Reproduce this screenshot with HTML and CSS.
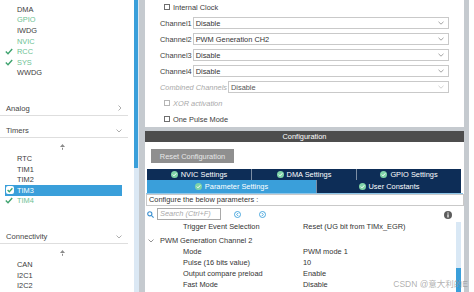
FILE: index.html
```html
<!DOCTYPE html>
<html lang="en">
<head>
  <meta charset="UTF-8">
  <title>TIM3 Mode and Configuration</title>
  <link rel="stylesheet" href="styles.css">
</head>
<body>
  <div class="app">
    <aside class="sidebar">
      <ul class="periph">
        <li>DMA</li>
        <li class="on">GPIO</li>
        <li>IWDG</li>
        <li class="on">NVIC</li>
        <li class="on ok"><svg class="tick" width="8" height="7" viewBox="0 0 8 7"><polyline points="0.8,3.6 3,5.8 7.2,1"/></svg>RCC</li>
        <li class="on ok"><svg class="tick" width="8" height="7" viewBox="0 0 8 7"><polyline points="0.8,3.6 3,5.8 7.2,1"/></svg>SYS</li>
        <li>WWDG</li>
      </ul>

      <div class="cat">Analog
        <svg width="5" height="6" viewBox="0 0 5 6"><polyline points="1.5,0.5 4,3 1.5,5.5"/></svg>
      </div>
      <div class="cat">Timers
        <svg width="6" height="5" viewBox="0 0 6 5"><polyline points="0.5,1.5 3,4 5.5,1.5"/></svg>
      </div>
      <div class="sort">
        <svg width="5" height="6" viewBox="0 0 5 6"><polygon points="0,3 2.5,0 5,3"/><rect x="2" y="3.8" width="1" height="2"/></svg>
      </div>
      <ul class="periph">
        <li>RTC</li>
        <li>TIM1</li>
        <li>TIM2</li>
        <li class="sel"><svg class="box" width="8" height="8" viewBox="0 0 8 8"><rect x="0" y="0" width="8" height="8" rx="2"/><polyline points="1.6,4 3.3,5.7 6.4,2.2"/></svg>TIM3</li>
        <li class="on ok"><svg class="tick" width="8" height="7" viewBox="0 0 8 7"><polyline points="0.8,3.6 3,5.8 7.2,1"/></svg>TIM4</li>
      </ul>

      <div class="cat">Connectivity
        <svg width="6" height="5" viewBox="0 0 6 5"><polyline points="0.5,1.5 3,4 5.5,1.5"/></svg>
      </div>
      <div class="sort">
        <svg width="5" height="6" viewBox="0 0 5 6"><polygon points="0,3 2.5,0 5,3"/><rect x="2" y="3.8" width="1" height="2"/></svg>
      </div>
      <ul class="periph">
        <li>CAN</li>
        <li>I2C1</li>
        <li>I2C2</li>
      </ul>
    </aside>

    <div class="side-scroll"><div class="thumb"></div></div>
    <div class="divider"></div>

    <main class="main">
      <section class="mode">
        <div class="row check"><span class="cb"></span>Internal Clock</div>
        <div class="row"><span class="lbl">Channel1</span>
          <div class="select"><span>Disable</span><svg width="6" height="4" viewBox="0 0 6 4"><polyline points="0.5,0.8 3,3.2 5.5,0.8"/></svg></div>
        </div>
        <div class="row"><span class="lbl">Channel2</span>
          <div class="select"><span>PWM Generation CH2</span><svg width="6" height="4" viewBox="0 0 6 4"><polyline points="0.5,0.8 3,3.2 5.5,0.8"/></svg></div>
        </div>
        <div class="row"><span class="lbl">Channel3</span>
          <div class="select"><span>Disable</span><svg width="6" height="4" viewBox="0 0 6 4"><polyline points="0.5,0.8 3,3.2 5.5,0.8"/></svg></div>
        </div>
        <div class="row"><span class="lbl">Channel4</span>
          <div class="select"><span>Disable</span><svg width="6" height="4" viewBox="0 0 6 4"><polyline points="0.5,0.8 3,3.2 5.5,0.8"/></svg></div>
        </div>
        <div class="row"><span class="lbl muted">Combined Channels</span>
          <div class="select off"><span>Disable</span><svg width="6" height="4" viewBox="0 0 6 4"><polyline points="0.5,0.8 3,3.2 5.5,0.8"/></svg></div>
        </div>
        <div class="row check muted"><span class="cb"></span>XOR activation</div>
        <div class="row check"><span class="cb"></span>One Pulse Mode</div>
      </section>

      <div class="sep"></div>
      <div class="cfg-title">Configuration</div>

      <section class="cfg">
        <button class="reset">Reset Configuration</button>

        <div class="tabs">
          <div class="tab-row">
            <div class="tab"><svg width="7" height="7" viewBox="0 0 7 7"><circle cx="3.5" cy="3.5" r="3.5"/><polyline points="1.8,3.6 3,4.8 5.3,2.3"/></svg>NVIC Settings</div>
            <div class="tab"><svg width="7" height="7" viewBox="0 0 7 7"><circle cx="3.5" cy="3.5" r="3.5"/><polyline points="1.8,3.6 3,4.8 5.3,2.3"/></svg>DMA Settings</div>
            <div class="tab"><svg width="7" height="7" viewBox="0 0 7 7"><circle cx="3.5" cy="3.5" r="3.5"/><polyline points="1.8,3.6 3,4.8 5.3,2.3"/></svg>GPIO Settings</div>
          </div>
          <div class="tab-row tall">
            <div class="tab active"><svg width="7" height="7" viewBox="0 0 7 7"><circle cx="3.5" cy="3.5" r="3.5"/><polyline points="1.8,3.6 3,4.8 5.3,2.3"/></svg>Parameter Settings</div>
            <div class="tab"><svg width="7" height="7" viewBox="0 0 7 7"><circle cx="3.5" cy="3.5" r="3.5"/><polyline points="1.8,3.6 3,4.8 5.3,2.3"/></svg>User Constants</div>
          </div>
        </div>
        <div class="tab-line"></div>

        <div class="cfg-box">Configure the below parameters :</div>

        <div class="search">
          <svg class="glass" width="7" height="7" viewBox="0 0 7 7"><circle cx="2.8" cy="2.8" r="2.1"/><line x1="4.3" y1="4.3" x2="6.6" y2="6.6"/></svg>
          <div class="search-input">Search (Ctrl+F)</div>
          <svg class="nav prev" width="7" height="7" viewBox="0 0 7 7"><circle cx="3.5" cy="3.5" r="3"/><polyline points="4.2,2 2.7,3.5 4.2,5"/></svg>
          <svg class="nav next" width="7" height="7" viewBox="0 0 7 7"><circle cx="3.5" cy="3.5" r="3"/><polyline points="2.8,2 4.3,3.5 2.8,5"/></svg>
          <svg class="info" width="8" height="8" viewBox="0 0 8 8"><circle cx="4" cy="4" r="4"/><rect x="3.4" y="1.5" width="1.2" height="1.1"/><rect x="3.4" y="3.3" width="1.2" height="3.2"/></svg>
        </div>

        <div class="params">
          <div class="plist">
            <div class="prow"><span class="k">Trigger Event Selection</span><span>Reset (UG bit from TIMx_EGR)</span></div>
            <div class="prow group"><svg width="6" height="5" viewBox="0 0 6 5"><polyline points="0.5,1.5 3,4 5.5,1.5"/></svg>PWM Generation Channel 2</div>
            <div class="prow"><span class="k">Mode</span><span>PWM mode 1</span></div>
            <div class="prow"><span class="k">Pulse (16 bits value)</span><span>10</span></div>
            <div class="prow"><span class="k">Output compare preload</span><span>Enable</span></div>
            <div class="prow"><span class="k">Fast Mode</span><span>Disable</span></div>
          </div>
          <div class="pscroll"><div class="thumb"></div></div>
        </div>
      </section>
    </main>

    <div class="divider right"></div>
  </div>

  <div class="watermark">CSDN @意大利的E</div>
</body>
</html>
```

FILE: styles.css
```css
* {
  box-sizing: border-box;
}

html, body {
  margin: 0;
}

body {
  width: 474px;
  height: 292px;
  overflow: hidden;
  position: relative;
  background: #fff;
  color: #3c3c3c;
  font-family: "Liberation Sans", Arial, sans-serif;
  font-size: 7.4px;
}

.app {
  display: flex;
  height: 292px;
}

/* left tree */

.sidebar {
  width: 134px;
  flex: none;
  padding-top: 4px;
}

.periph {
  list-style: none;
  margin: 0 0 16px;
  padding: 0;
}

.periph li {
  height: 10.6px;
  display: flex;
  align-items: center;
  padding-left: 17px;
}

.periph li.on {
  color: #6cc193;
}

.periph li.ok {
  padding-left: 5px;
}

.tick {
  margin-right: 4px;
  fill: none;
  stroke: #3fa36f;
  stroke-width: 1.4;
}

.periph li.sel {
  background: #3a9fda;
  color: #fff;
  padding-left: 1px;
  margin: 0 12px 0 5px;
}

.box {
  margin-right: 3px;
}

.box rect {
  fill: #fff;
}

.box polyline {
  fill: none;
  stroke: #3fa36f;
  stroke-width: 1.3;
}

.cat {
  height: 22px;
  margin-right: 6px;
  padding: 0 6px 2px;
  border-bottom: 1px solid #dedede;
  display: flex;
  align-items: flex-end;
  justify-content: space-between;
  color: #454545;
  font-size: 7.6px;
}

.cat svg {
  margin-bottom: 2px;
  fill: none;
  stroke: #999;
  stroke-width: 0.8;
}

.sort {
  height: 15px;
  padding: 6px 0 0 60px;
  display: flex;
  align-items: flex-start;
}

.sort svg {
  fill: #8a8a8a;
}

.side-scroll {
  width: 5px;
  flex: none;
  background: #dbe8f4;
}

.side-scroll .thumb {
  height: 168px;
  width: 4px;
  background: #3a9fda;
}

.divider {
  width: 6px;
  flex: none;
  background: #c5cacf;
}

.divider.right {
  width: 5px;
}

/* main area */

.main {
  width: 319px;
  flex: none;
}

.mode {
  height: 127px;
  padding: 1px 15px 0;
  display: flex;
  flex-direction: column;
  gap: 4px;
}

.row {
  height: 12px;
  display: flex;
  align-items: center;
}

.row.check {
  padding-left: 4px;
}

.cb {
  width: 6px;
  height: 6px;
  margin-right: 3px;
  border: 1px solid #6e6e6e;
}

.muted {
  color: #a9a9a9;
  font-style: italic;
}

.muted .cb {
  border-color: #b5b5b5;
}

.lbl {
  margin-right: 1px;
}

.select {
  flex: 1;
  height: 12px;
  padding: 0 4px 0 2px;
  border: 1px solid #c9c9c9;
  display: flex;
  align-items: center;
  justify-content: space-between;
  color: #333;
}

.select svg {
  fill: none;
  stroke: #8a8a8a;
  stroke-width: 0.8;
}

.select.off {
  color: #555;
}

.select.off svg {
  stroke: #c4c4c4;
}

.sep {
  height: 4px;
  background: #c5cacf;
}

.cfg-title {
  height: 11px;
  line-height: 11px;
  background: #4d4d4d;
  color: #fff;
  text-align: center;
}

.cfg {
  padding-top: 7px;
}

.reset {
  display: block;
  width: 83px;
  height: 14px;
  margin-left: 6px;
  padding: 0;
  border: 0;
  background: #8f8f8f;
  color: #e8e8e8;
  font: inherit;
}

.tabs {
  margin: 6px 3px 0 2px;
}

.tab-row {
  display: flex;
  height: 11px;
  background: #0d2d57;
}

.tab-row.tall {
  height: 13px;
}

.tab {
  flex: 1;
  display: flex;
  align-items: center;
  justify-content: center;
  gap: 3px;
  color: #fff;
  border-left: 1px solid #7c8ea5;
}

.tab:first-child {
  border-left: 0;
}

.tab.active {
  flex: none;
  width: 169px;
  background: #3a9fda;
}

.tab svg circle {
  fill: #7fd4a8;
}

.tab svg polyline {
  fill: none;
  stroke: #fff;
  stroke-width: 1;
}

.tab-line {
  height: 1px;
  margin: 0 1px;
  background: #8cc6ea;
}

.cfg-box {
  height: 12px;
  margin-left: 1px;
  padding-left: 2px;
  line-height: 10px;
  border: 1px solid #c9c9c9;
  color: #333;
}

.search {
  height: 12px;
  margin-top: 2px;
  padding-left: 2px;
  display: flex;
  align-items: center;
}

.glass {
  fill: none;
  stroke: #3a8fd0;
  stroke-width: 1.1;
}

.search-input {
  width: 64px;
  height: 12px;
  margin-left: 3px;
  padding-left: 2px;
  line-height: 10px;
  border: 1px solid #a9a9a9;
  color: #a9a9a9;
  font-style: italic;
}

.nav {
  fill: none;
  stroke: #3a9fda;
  stroke-width: 0.9;
}

.prev {
  margin-left: 13px;
}

.next {
  margin-left: 18px;
}

.info {
  margin-left: auto;
  margin-right: 12px;
  margin-top: 2px;
}

.info circle {
  fill: #5c5c5c;
}

.info rect {
  fill: #fff;
}

.params {
  display: flex;
}

.plist {
  flex: 1;
  padding-top: 1px;
}

.prow {
  height: 11px;
  display: flex;
  align-items: center;
  color: #333;
}

.prow .k {
  width: 158px;
  padding-left: 38px;
}

.prow.group {
  margin: 3px 0 0;
  padding-left: 3px;
}

.prow.group svg {
  margin-right: 6px;
  fill: none;
  stroke: #777;
  stroke-width: 0.8;
}

.pscroll {
  width: 5px;
  height: 70px;
  margin: 2px 3px 0 0;
  background: #d9e8f5;
  display: flex;
  flex-direction: column;
  justify-content: flex-end;
}

.pscroll .thumb {
  height: 24px;
  background: #3a9fda;
}

.watermark {
  position: absolute;
  right: 6px;
  bottom: 3px;
  color: rgba(150, 150, 150, 0.75);
  font-family: "Liberation Sans", "Noto Sans CJK SC", sans-serif;
  font-size: 8.5px;
}
```
